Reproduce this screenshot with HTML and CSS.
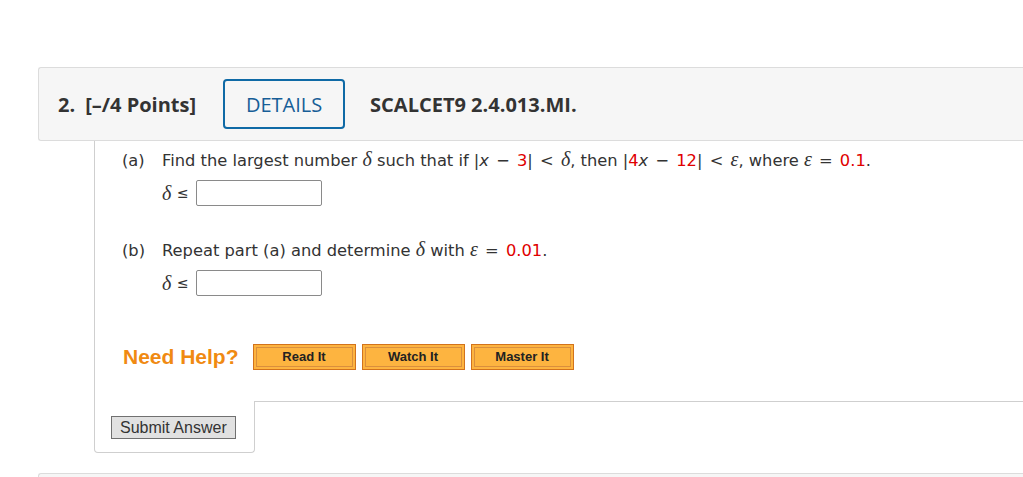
FILE: index.html
```html
<!DOCTYPE html>
<html lang="en">
<head>
<meta charset="utf-8">
<title>Question 2</title>
<link rel="stylesheet" href="styles.css">
</head>
<body>
<div class="page">
  <section class="question">
    <header class="qhead">
      <span class="qnum">2.</span>
      <span class="qpoints">[–/4 Points]</span>
      <button class="details">DETAILS</button>
      <span class="qref">SCALCET9 2.4.013.MI.</span>
    </header>
    <div class="qbody">
      <div class="part part-a">
        <span class="plabel">(a)</span>
        <span class="ptext">Find the largest number <i class="m">δ</i> such that if |<i class="mx">x</i> <span class="op">−</span> <span class="red">3</span>| <span class="op">&lt;</span> <i class="m">δ</i>, then |<span class="red">4</span><i class="mx">x</i> <span class="op">−</span> <span class="red">12</span>| <span class="op">&lt;</span> <i class="m">ε</i>, where <i class="m">ε</i> <span class="op">=</span> <span class="red">0.1</span>.</span>
      </div>
      <div class="answer">
        <i class="m ad">δ</i><span class="le">≤</span><input class="ans" type="text">
      </div>
      <div class="part part-b">
        <span class="plabel">(b)</span>
        <span class="ptext">Repeat part (a) and determine <i class="m">δ</i> with <i class="m">ε</i> <span class="op">=</span> <span class="red">0.01</span>.</span>
      </div>
      <div class="answer">
        <i class="m ad">δ</i><span class="le">≤</span><input class="ans" type="text">
      </div>
      <div class="help">
        <span class="needhelp">Need Help?</span>
        <button class="hbtn">Read It</button>
        <button class="hbtn">Watch It</button>
        <button class="hbtn">Master It</button>
      </div>
    </div>
    <div class="qfoot">
      <div class="submitcell"><button class="submit">Submit Answer</button></div>
      <div class="footfill"></div>
    </div>
  </section>
  <section class="question next">
    <header class="qhead nexthead"></header>
  </section>
</div>
</body>
</html>
```
FILE: styles.css
```css
html, body {
  margin: 0;
  padding: 0;
  background: #fff;
}
.page {
  padding: 67px 0 0 38px;
  overflow: hidden;
  height: 410px;
}
.qhead {
  display: flex;
  align-items: center;
  height: 72px;
  background: #f6f6f6;
  border: 1px solid #dcdcdc;
  border-right: none;
  border-radius: 3px 0 0 3px;
  padding-left: 19px;
  font-family: "Open Sans", sans-serif;
  color: #333;
}
.qnum {
  font-weight: 700;
  font-size: 20px;
  margin-right: 10px;
}
.qpoints {
  font-weight: 700;
  font-size: 20px;
}
.details {
  margin-left: 27px;
  width: 122px;
  height: 50px;
  background: transparent;
  border: 2px solid #0f6aa6;
  border-radius: 4px;
  color: #175e97;
  font-family: "Open Sans", sans-serif;
  font-size: 20px;
  padding: 0;
}
.qref {
  margin-left: 25px;
  font-weight: 700;
  font-size: 20px;
}
.qbody {
  margin-left: 56px;
  border-left: 1px solid #cfcfcf;
  padding: 9px 0 32px 27px;
  font-family: "DejaVu Sans", Verdana, sans-serif;
  font-size: 16.3px;
  color: #333;
}
.part {
  display: flex;
  height: 21px;
  line-height: 21px;
  white-space: nowrap;
}
.part-b {
  margin-top: 34px;
}
.plabel {
  width: 40px;
}
.m {
  font-family: "Liberation Serif", "DejaVu Serif", serif;
  font-size: 20px;
  line-height: 10px;
  font-style: italic;
}
.mx {
  font-style: italic;
}
.op {
  padding: 0 2px;
}
.red {
  color: #e00000;
}
.answer {
  display: flex;
  align-items: center;
  margin: 9px 0 0 40px;
  height: 26px;
}
.ad {
  width: 15px;
}
.le {
  width: 19px;
  font-size: 14px;
}
.ans {
  width: 126px;
  box-sizing: border-box;
  height: 26px;
  border: 1px solid #8a8a8a;
  border-radius: 2px;
  padding: 0;
  margin: 0;
}
.help {
  display: flex;
  align-items: center;
  margin-top: 48px;
  margin-left: 1px;
  height: 25px;
}
.needhelp {
  font-family: "Liberation Sans", Arial, sans-serif;
  font-weight: 700;
  font-size: 21px;
  color: #f08a12;
  margin-right: 14px;
}
.hbtn {
  width: 103px;
  height: 26px;
  margin-right: 6px;
  background: #fdb440;
  border: 1px solid #d2731c;
  box-shadow: inset 0 0 0 2px #fdb440, inset 0 0 0 3px #d98f3e;
  font-family: "Liberation Sans", Arial, sans-serif;
  font-weight: 700;
  font-size: 13px;
  color: #222;
  padding: 0;
}
.qfoot {
  display: flex;
  margin-left: 56px;
}
.submitcell {
  width: 143px;
  border: 1px solid #cfcfcf;
  border-top: none;
  border-radius: 0 0 4px 4px;
  padding: 15px 0 0 16px;
  height: 36px;
}
.submit {
  font-family: "Liberation Sans", Arial, sans-serif;
  font-size: 16px;
  color: #333;
  background: #e1e1e1;
  border: 1px solid #707070;
  height: 23px;
  padding: 0 8px;
  margin: 0;
  line-height: 20px;
}
.footfill {
  flex: 1;
  border-top: 1px solid #cfcfcf;
}
.next {
  margin-top: 20px;
}
.nexthead {
  height: 40px;
}
```
